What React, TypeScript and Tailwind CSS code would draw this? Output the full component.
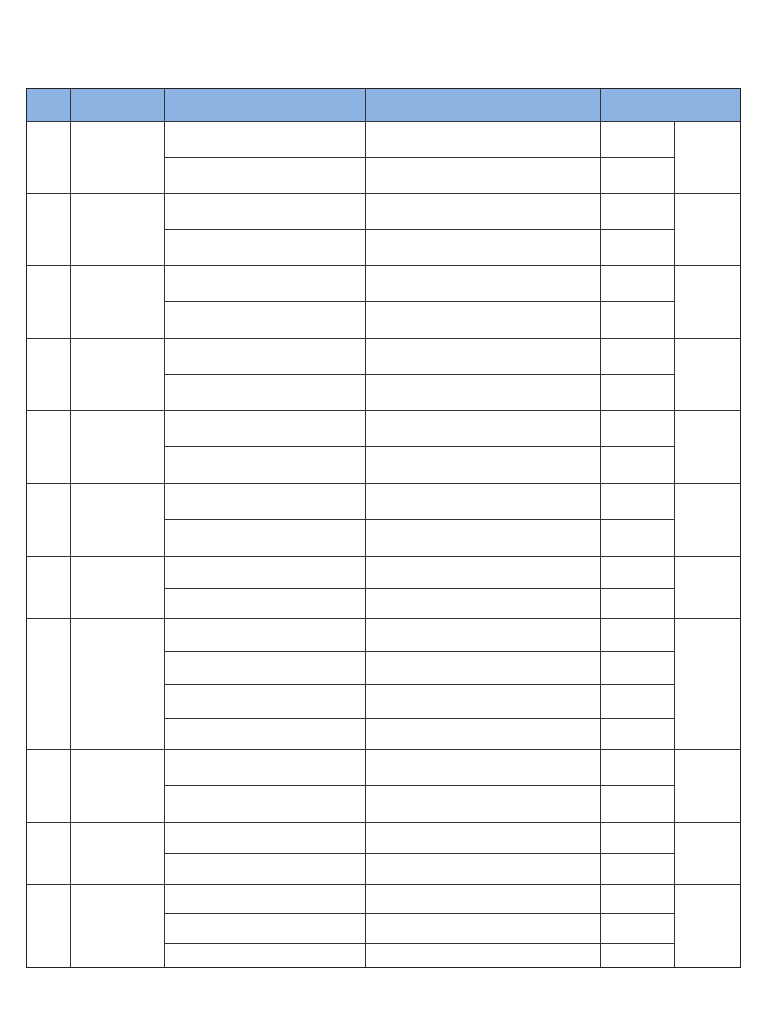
const groups = [2, 2, 2, 2, 2, 2, 2, 4, 2, 2, 3];

const span: Record<number, string> = {
  2: "row-span-2",
  3: "row-span-3",
  4: "row-span-4",
};

export default function App() {
  const cells: JSX.Element[] = [];
  groups.forEach((n, g) => {
    cells.push(<div key={`no-${g}`} className={`bg-white ${span[n]}`} />);
    cells.push(<div key={`nm-${g}`} className={`bg-white ${span[n]}`} />);
    for (let r = 0; r < n; r++) {
      cells.push(<div key={`a-${g}-${r}`} className="bg-white" />);
      cells.push(<div key={`b-${g}-${r}`} className="bg-white" />);
      cells.push(<div key={`c-${g}-${r}`} className="bg-white" />);
      if (r === 0) cells.push(<div key={`d-${g}`} className={`bg-white ${span[n]}`} />);
    }
  });

  return (
    <div className="min-h-[1024px] bg-white pl-[26px] pt-[88px]">
      <div className="grid w-[715px] grid-cols-[43px_93px_200px_234px_73px_65px] grid-rows-[32px_35px_35px_35px_35px_35px_36px_35px_35px_35px_36px_35px_36px_31px_29px_32px_32px_33px_30px_35px_36px_30px_30px_28px_29px_23px] gap-px border border-[#222] bg-[#333]">
        <div className="bg-[#8db3e2]" />
        <div className="bg-[#8db3e2]" />
        <div className="bg-[#8db3e2]" />
        <div className="bg-[#8db3e2]" />
        <div className="col-span-2 bg-[#8db3e2]" />
        {cells}
      </div>
    </div>
  );
}
